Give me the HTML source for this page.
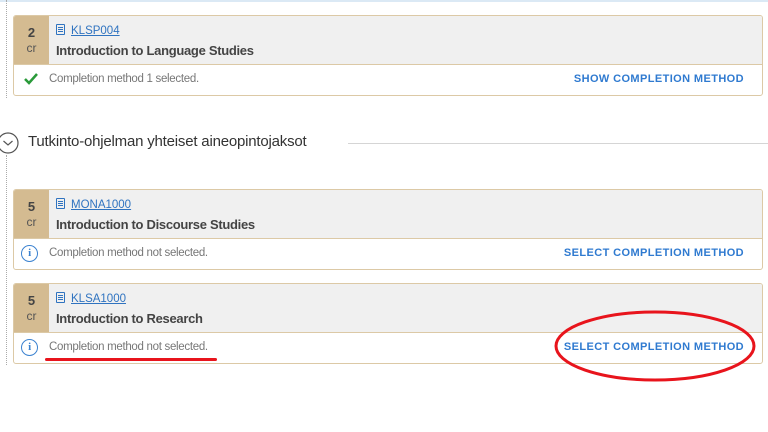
<!DOCTYPE html>
<html><head><style>
body{margin:0;width:768px;height:432px;background:#fff;font-family:"Liberation Sans",sans-serif;position:relative;overflow:hidden}
.topbar{position:absolute;left:0;top:0;width:768px;height:2px;background:#dbe9f5}
.dots{position:absolute;left:6px;border-left:1px dotted #aaa}
.card{position:absolute;left:13px;width:748px;border:1px solid #dcc9a6;border-radius:3px;background:#fff;overflow:hidden}
.hd{height:48px;background:#f0f0f0;border-bottom:1px solid #dcc9a6;position:relative}
.cr{position:absolute;left:0;top:0;width:35px;height:48px;background:#d4bb91;text-align:center;color:#555}
.cr b{display:block;font-size:13px;margin-top:9px;color:#444}
.cr span{display:block;font-size:12px;margin-top:1px}
.code{position:absolute;left:42px;top:8px;font-size:11.5px;color:#2f73c0}
.code u{padding-left:4px}
.code i{display:inline-block;width:9px;height:11px;border:1px solid #2f73c0;border-radius:1px;margin-right:2px;vertical-align:-1px;box-sizing:border-box;background:linear-gradient(#2f73c0,#2f73c0) 1px 2px/5px 1px no-repeat,linear-gradient(#2f73c0,#2f73c0) 1px 4px/5px 1px no-repeat,linear-gradient(#2f73c0,#2f73c0) 1px 6px/5px 1px no-repeat}
.title{position:absolute;left:42px;top:27px;font-size:13px;font-weight:bold;color:#444;letter-spacing:-0.3px}
.ft{height:30px;position:relative;font-size:11.5px;color:#777;letter-spacing:-0.3px}
.ft .t{position:absolute;left:35px;top:8px}
.ft .a{position:absolute;right:18px;top:8px;color:#2f7ad0;font-weight:bold;font-size:11px;letter-spacing:0.4px}
.info{position:absolute;left:7px;top:6px;width:17px;height:17px;border:1.5px solid #3b82d0;border-radius:50%;box-sizing:border-box;color:#3b82d0;font-size:11px;font-weight:bold;text-align:center;line-height:15px;font-family:"Liberation Serif",serif}
</style></head><body>
<div class="topbar"></div>
<div class="dots" style="top:0;height:98px"></div>
<div class="dots" style="top:155px;height:210px"></div>

<div class="card" style="top:15px">
 <div class="hd"><div class="cr"><b>2</b><span>cr</span></div>
 <div class="code"><i></i><u>KLSP004</u></div><div class="title">Introduction to Language Studies</div></div>
 <div class="ft"><svg style="position:absolute;left:10px;top:8px" width="14" height="12" viewBox="0 0 14 12"><path d="M1 6 L5 10 L13 1" stroke="#2a9a3a" stroke-width="2.5" fill="none"/></svg><span class="t">Completion method 1 selected.</span><span class="a">SHOW COMPLETION METHOD</span></div>
</div>

<svg style="position:absolute;left:0;top:132px" width="22" height="24"><circle cx="8" cy="11" r="10" fill="#fff" stroke="#555" stroke-width="1.2"/><path d="M3.5 9 L8 13 L12.5 9" stroke="#555" stroke-width="1.2" fill="none"/></svg>
<div style="position:absolute;left:28px;top:133px;font-size:15px;color:#333;letter-spacing:-0.2px">Tutkinto-ohjelman yhteiset aineopintojaksot</div>
<div style="position:absolute;left:348px;top:143px;width:420px;height:1px;background:#d5d5d5"></div>

<div class="card" style="top:189px">
 <div class="hd"><div class="cr"><b>5</b><span>cr</span></div>
 <div class="code"><i></i><u>MONA1000</u></div><div class="title">Introduction to Discourse Studies</div></div>
 <div class="ft"><div class="info">i</div><span class="t">Completion method not selected.</span><span class="a">SELECT COMPLETION METHOD</span></div>
</div>

<div class="card" style="top:283px">
 <div class="hd"><div class="cr"><b>5</b><span>cr</span></div>
 <div class="code"><i></i><u>KLSA1000</u></div><div class="title">Introduction to Research</div></div>
 <div class="ft"><div class="info">i</div><span class="t">Completion method not selected.</span><span class="a">SELECT COMPLETION METHOD</span></div>
</div>

<div style="position:absolute;left:45px;top:358px;width:172px;height:3px;background:#e8141c;border-radius:2px"></div>
<svg style="position:absolute;left:0;top:0" width="768" height="432"><ellipse cx="655" cy="346" rx="99" ry="34" fill="none" stroke="#e8141c" stroke-width="3"/></svg>
</body></html>
